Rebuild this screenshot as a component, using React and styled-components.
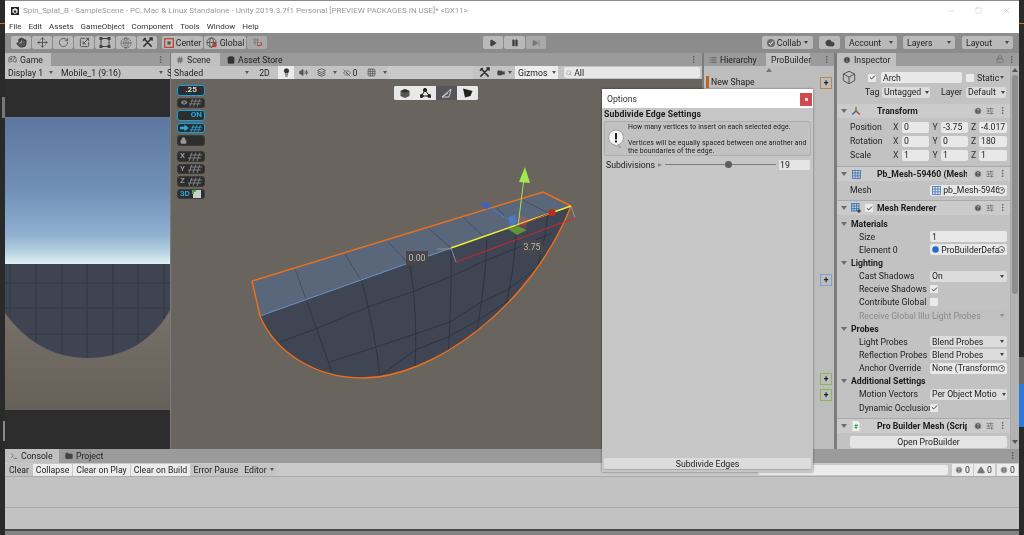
import React from "react";
import styled, { createGlobalStyle } from "styled-components";
import { Hand, Move, RotateCw, Scaling, Play, Pause, SkipForward, Cloud, Lightbulb, Volume2, Layers, Video, Search, Lock, Eye, Grid3x3, EyeOff, Gamepad2, Hash, ShoppingBag, Info, HelpCircle, SlidersHorizontal, MoreVertical, List, Folder, Terminal, Check, Minus, Square, X, AlertTriangle, AlertCircle } from "lucide-react";

const Global = createGlobalStyle`
  html, body { margin: 0; padding: 0; background: #2a2a2a; }
  * { box-sizing: border-box; }
  body { font-family: Roboto, "Liberation Sans", sans-serif; font-size: 8.7px; color: #1c1c1c; }
`;

const Desktop = styled.div`
  width: 1024px; height: 535px; display: flex; overflow: hidden; background: #2a2a2a; filter: blur(.3px);
`;
const Strip = styled.div`
  width: 5px; flex: none; background: #2a2a2a; display: flex; flex-direction: column;
`;
const StripMark = styled.div`
  height: ${p => p.$h}px; margin-top: ${p => p.$top}px; margin-left: ${p => p.$ml || 0}px; background: ${p => p.$c}; flex: none;
`;
const Win = styled.div`
  flex: 1; position: relative; display: flex; flex-direction: column; min-width: 0;
`;
const TitleBar = styled.div`
  height: 20px; background: #fff; border-top: 1px solid #8b8b8b; display: flex; align-items: center;
  padding-left: 6px; color: #9a9a9a; font-size: 8px; white-space: nowrap;
`;
const AppLogo = styled.div`
  width: 8px; height: 8px; background: #222; margin-right: 4px;
  display: flex; align-items: center; justify-content: center;
`;
const WinButtons = styled.div`
  margin-left: auto; display: flex; gap: 20px; padding-right: 8px; color: #9a9a9a; align-items: center;
`;
const MenuBar = styled.div`
  height: 13px; background: #fff; display: flex; align-items: center; padding-left: 4px; gap: 7px;
  font-size: 8px; color: #333;
`;
const Toolbar = styled.div`
  height: 20px; background: #8c8c8c; display: flex; align-items: flex-start; padding: 3px 6px 0;
`;
const ToolGroup = styled.div`
  display: flex; gap: ${p => p.$gap ?? 1}px; margin-left: ${p => p.$ml || 0}px;
`;
const ToolBtn = styled.div`
  width: ${p => p.$w || 20}px; height: 13px; background: ${p => p.$bg || "#b9b9b9"};
  border-radius: 2px; display: flex; align-items: center; justify-content: ${p => p.$j || "center"}; gap: 2px;
  padding: 0 ${p => (p.$j ? 4 : 0)}px; color: #1f1f1f; white-space: nowrap;
`;
const Spacer = styled.div` flex: 1; `;
const Work = styled.div`
  height: 396px; display: flex; background: #7c7c7c;
`;
const Panel = styled.div`
  width: ${p => p.$w}px; margin-left: ${p => p.$ml || 0}px; flex: none; display: flex; flex-direction: column; min-height: 0; position: relative;
`;
const TabRow = styled.div`
  height: 13px; background: #9b9b9b; display: flex; align-items: stretch; flex: none; position: relative;
`;
const Tab = styled.div`
  width: ${p => p.$w}px; background: ${p => (p.$on ? "#c0c0c0" : "transparent")};
  display: flex; align-items: center; padding-left: ${p => p.$pl ?? 4}px; gap: 3px; color: #1f1f1f; white-space: nowrap;
`;
const Kebab = styled.div`
  position: absolute; right: ${p => p.$r}px; top: 2px; color: #555; display: flex;
`;
const CtlRow = styled.div`
  height: 13px; background: #c3c3c3; display: flex; align-items: center; flex: none; color: #1f1f1f;
`;
const Ctl = styled.div`
  width: ${p => p.$w}px; flex: none; margin-left: ${p => p.$ml || 0}px; height: 13px; display: flex; align-items: center;
  padding-left: ${p => p.$pl ?? 3}px; justify-content: ${p => (p.$center ? "center" : "flex-start")};
  background: ${p => p.$bg || "transparent"}; position: relative; gap: 2px; white-space: nowrap; overflow: hidden;
`;
const Caret = styled.span`
  width: 0; height: 0; flex: none; border-left: 2.5px solid transparent; border-right: 2.5px solid transparent;
  border-top: 3px solid ${p => p.$c || "#444"};
  margin-left: ${p => (p.$auto ? "auto" : "1px")}; margin-right: ${p => p.$mr ?? 3}px;
`;
const GameView = styled.div`
  flex: 1; display: flex; flex-direction: column; background: #2d2d2d;
`;
const Letterbox = styled.div` height: ${p => p.$h}px; flex: none; background: #2d2d2d; `;
const GameScreen = styled.svg` display: block; flex: none; `;
const SceneView = styled.div`
  flex: 1; position: relative; background: #6a645e; overflow: hidden;
`;
const MeshSvg = styled.svg` position: absolute; inset: 0; display: block; `;
const SnapColumn = styled.div`
  position: absolute; left: 6px; top: 6px; width: 28px; display: flex; flex-direction: column; gap: 2px;
`;
const Snap = styled.div`
  height: 10.6px; border-radius: 3px; background: #2d2d2d; margin-top: ${p => p.$mt || 0}px;
  border: ${p => (p.$cy ? "1px solid #12a3dc" : "1px solid #3c3c3c")}; display: flex; align-items: center; justify-content: ${p => p.$j || "space-between"};
  padding: 0 2px; font-size: 8px; font-weight: 600; color: ${p => p.$c || "#9a9a9a"}; line-height: 1; overflow: hidden;
`;
const ModeBar = styled.div`
  position: absolute; left: 223px; top: 7px; height: 14px; display: flex; border-radius: 2px; overflow: hidden; background: #e6e6e6;
`;
const ModeBtn = styled.div`
  width: 21px; background: ${p => (p.$on ? "#56565a" : "#e8e8e8")}; display: flex; align-items: center; justify-content: center;
`;
const Badge = styled.div`
  position: absolute; left: ${p => p.$x}px; top: ${p => p.$y}px; width: 22px; height: 14px; background: #47474a; color: #b8b8b8; display: flex; align-items: center; justify-content: center;
`;
const HierBody = styled.div`
  flex: 1; background: #bdbdbd; position: relative;
`;
const HierUp = styled.div`
  width: 0; height: 0; border-left: 3px solid transparent; border-right: 3px solid transparent; border-bottom: 4px solid #777;
  position: absolute; top: 2px; left: 62px;
`;
const HierRow = styled.div`
  position: absolute; left: 2px; top: 10px; width: 108px; height: 12px; display: flex; align-items: center; gap: 2px;
  &::before { content: ""; width: 3px; height: 12px; background: #bd6523; }
`;
const PlusBox = styled.div`
  position: absolute; left: 116px; top: ${p => p.$y}px; width: 12px; height: 12px; border: 1px solid ${p => p.$c}; display: flex; align-items: center; justify-content: center; font-weight: 700; color: #222; line-height: 1;
`;
const Insp = styled.div`
  flex: 1; display: flex; background: #c2c2c2; min-height: 0; overflow: hidden;
`;
const InspContent = styled.div`
  width: 173px; flex: none; overflow: hidden;
`;
const Scrollbar = styled.div`
  width: 9px; flex: none; background: #b2b2b2; position: relative; border-left: 1px solid #ababab;
`;
const Thumb = styled.div`
  position: absolute; left: 1px; right: 1px; top: 9px; height: 219px; background: #8e8e8e; border-radius: 3px;
`;
const ArrowTip = styled.div`
  position: absolute; left: 1px; top: ${p => p.$y}px; width: 0; height: 0; border-left: 3px solid transparent; border-right: 3px solid transparent;
  ${p => (p.$down ? "border-top: 4px solid #555;" : "border-bottom: 4px solid #555;")}
`;
const ObjRow = styled.div`
  height: ${p => p.$h}px; margin-top: ${p => p.$mt || 0}px; display: flex; align-items: center; padding-left: ${p => p.$pl || 0}px;
  color: #222; flex: none; white-space: nowrap;
`;
const CubeWrap = styled.div`
  width: 14px; height: 16px; margin-left: 5px; margin-right: 12px; display: flex; align-items: center; flex: none;
`;
const Checkbox = styled.div`
  width: 8px; height: 8px; background: #eaeaea; border-radius: 1px; flex: none; display: flex; align-items: center; justify-content: center; color: #222; margin-left: ${p => p.$ml || 0}px;
`;
const TextField = styled.div`
  width: ${p => p.$w}px; height: 11px; background: #e8e8e8; border-radius: 2px; display: flex; align-items: center; padding-left: 2px; flex: none;
  margin-left: ${p => p.$ml || 0}px; color: #222; overflow: hidden; white-space: nowrap; position: relative;
`;
const Select = styled(TextField)`
  background: ${p => (p.$dis ? "#c0c0c0" : "#dcdcdc")}; color: ${p => (p.$dis ? "#8a8a8a" : "#222")};
`;
const Hdr = styled.div`
  height: 14px; background: #cbcbcb; margin-top: ${p => p.$mt || 0}px; display: flex; align-items: center; padding-left: 4px; font-weight: 700; position: relative;
  white-space: nowrap; flex: none;
`;
const Fold = styled.span`
  width: 0; height: 0; flex: none; border-left: 3px solid transparent; border-right: 3px solid transparent; border-top: 4px solid #6c6c6c; margin-right: ${p => p.$mr ?? 4}px;
`;
const HdrIcon = styled.div`
  width: 10px; height: 10px; display: flex; align-items: center; justify-content: center; margin-right: ${p => p.$mr ?? 16}px; flex: none;
`;
const HdrTitle = styled.div`
  width: ${p => p.$w || 90}px; margin-left: ${p => p.$ml || 0}px; overflow: hidden; flex: none;
`;
const HdrTools = styled.div`
  position: absolute; right: 3px; top: 2px; display: flex; gap: 4px; align-items: center; color: #555;
`;
const Section = styled.div`
  height: 13.15px; margin-top: ${p => p.$mt || 0}px; display: flex; align-items: center; padding-left: 4px; font-weight: 700; flex: none;
`;
const PropRow = styled.div`
  height: ${p => p.$h || 13.15}px; display: flex; align-items: center; flex: none; padding-left: ${p => p.$pl ?? 22}px; white-space: nowrap;
  color: ${p => (p.$dis ? "#8a8a8a" : "#222")}; margin-top: ${p => p.$mt || 0}px;
`;
const PropLabel = styled.div`
  width: ${p => p.$w ?? 71}px; flex: none; overflow: hidden; white-space: nowrap;
`;
const Axis = styled.span`
  width: ${p => p.$w}px; flex: none; text-align: ${p => p.$a || "left"}; color: #333;
`;
const Divider = styled.div`
  height: 1px; background: #a9a9a9; margin-top: ${p => p.$mt}px; flex: none;
`;
const OpenBtn = styled.div`
  margin: 3px 3px 0 13px; height: 12px; background: #e4e4e4; border-radius: 2px; display: flex; align-items: center; justify-content: center;
`;
const TargetDot = styled.span`
  position: absolute; right: 2px; top: 2px; width: 7px; height: 7px; border-radius: 50%; border: 1px solid #666; background: #e8e8e8;
  &::after { content: ""; position: absolute; left: 1.5px; top: 1.5px; width: 2px; height: 2px; border-radius: 50%; background: #666; }
`;
const Console = styled.div`
  flex: 1; display: flex; flex-direction: column; background: #c2c2c2; position: relative;
`;
const ConsoleTabs = styled(TabRow)` height: 14px; `;
const ConsoleBar = styled(CtlRow)` background: #c9c9c9; padding-right: 1px; `;
const LogBtn = styled.div`
  width: ${p => p.$w}px; height: 12px; background: ${p => (p.$on ? "#ececec" : "#c4c4c4")}; margin-left: ${p => p.$ml ?? 1}px; display: flex; align-items: center; justify-content: center; flex: none; gap: 2px; white-space: nowrap;
`;
const LogSearch = styled.div`
  margin-left: auto; width: 190px; height: 10px; border-radius: 3px; background: #ececec;
`;
const Count = styled.div`
  width: ${p => p.$w}px; height: 12px; margin-left: ${p => p.$ml ?? 1}px; background: #ececec; display: flex; align-items: center; justify-content: center; gap: 2px; flex: none; color: #333;
`;
const LogTop = styled.div`
  height: 32px; flex: none; background: #c2c2c2; border-bottom: 1px solid #a8a8a8; border-top: 1px solid #aaa;
`;
const LogBottom = styled.div` height: 21px; flex: none; background: #c2c2c2; `;
const StatusEdge = styled.div` height: 2px; background: #4a4a4a; flex: none; `;
const StatusBar = styled.div` flex: 1; background: #848484; `;
const Options = styled.div`
  position: absolute; left: 597px; top: 89px; width: 211px; height: 383px; background: #c6c6c6; box-shadow: 0 0 2px rgba(0,0,0,.5);
  display: flex; flex-direction: column;
`;
const OptTitle = styled.div`
  height: 19px; background: #fff; display: flex; align-items: center; padding-left: 5px; color: #333; position: relative;
`;
const Close = styled.div`
  position: absolute; right: 1px; top: 4px; width: 12px; height: 13px; background: #cf4b52; display: flex; align-items: center; justify-content: center;
  &::after { content: ""; width: 3px; height: 3px; background: #f6dcdc; }
`;
const OptHead = styled.div`
  height: 12px; padding-left: 2px; font-weight: 700; letter-spacing: .1px; display: flex; align-items: center; flex: none;
`;
const HelpBox = styled.div`
  margin: 1px 2px 0; height: 35px; background: #c1c1c1; border: 1px solid #aeaeae; display: flex; padding: 1px 0 0 2px; font-size: 6.9px; line-height: 8px; letter-spacing: .1px; flex: none; border-radius: 2px; white-space: nowrap;
`;
const HelpIcon = styled.div`
  width: 21px; flex: none; padding-top: 6px;
`;
const SliderRow = styled.div`
  height: 13px; margin-top: 2px; display: flex; align-items: center; padding-left: 4px; flex: none;
`;
const SliderLabel = styled.div` width: 52px; flex: none; `;
const SliderArrow = styled.span`
  width: 0; height: 0; border-top: 2.5px solid transparent; border-bottom: 2.5px solid transparent; border-left: 4px solid #888; margin-right: 3px; flex: none;
`;
const Track = styled.div`
  width: 111px; height: 1px; background: #7d7d7d; position: relative; flex: none;
`;
const Knob = styled.div`
  position: absolute; left: 60px; top: -3px; width: 7px; height: 7px; border-radius: 50%; background: #5c5c5c;
`;
const NumField = styled.div`
  width: 31px; height: 10px; margin-left: 3px; background: #e4e4e4; padding-left: 1px; display: flex; align-items: center; flex: none; border-radius: 1px;
`;
const OptFill = styled.div` flex: 1; `;
const OptBtn = styled.div`
  margin: 0 2px 2px; height: 12px; background: #dcdcdc; border-radius: 2px; border-bottom: 1px solid #a9a9a9; display: flex; align-items: center; justify-content: center; flex: none;
`;

const ic = { strokeWidth: 1.8 };
const Dots = () => <MoreVertical size={9} color="#555" strokeWidth={2} />;
const Tools = () => (
  <svg width="11" height="11" viewBox="0 0 12 12" fill="none" stroke="#333" strokeWidth="1.6">
    <path d="M1.5 10.5 10 2M2 1.5l8.5 9M8 1h3v3M1 4l3-3" />
  </svg>
);
const Transformed = () => (
  <svg width="12" height="11" viewBox="0 0 12 11" fill="none" stroke="#444" strokeWidth="1">
    <rect x="2" y="1.5" width="8" height="8" />
    <rect x="1" y=".5" width="2" height="2" fill="#444" /><rect x="9" y=".5" width="2" height="2" fill="#444" />
    <rect x="1" y="8.5" width="2" height="2" fill="#444" /><rect x="9" y="8.5" width="2" height="2" fill="#444" />
  </svg>
);
const CombinedTool = () => (
  <svg width="12" height="12" viewBox="0 0 12 12" fill="none" stroke="#555" strokeWidth=".9" strokeDasharray="1.4 .7">
    <circle cx="6" cy="6" r="5" /><ellipse cx="6" cy="6" rx="2.2" ry="5" /><path d="M1 6h10M6 1v10" />
  </svg>
);
const CenterIcon = () => (
  <svg width="10" height="10" viewBox="0 0 10 10"><rect x=".7" y=".7" width="8.6" height="8.6" fill="none" stroke="#c33b2b" strokeWidth="1.2" /><rect x="3.4" y="3.4" width="3.2" height="3.2" fill="#555" /></svg>
);
const GlobalIcon = () => (
  <svg width="12" height="11" viewBox="0 0 12 11" fill="none" stroke="#444" strokeWidth=".8">
    <circle cx="5.5" cy="5.5" r="4.6" /><ellipse cx="5.5" cy="5.5" rx="2" ry="4.6" /><path d="M1 5.5h9" /><circle cx="8.6" cy="8" r="2.2" fill="#c33b2b" stroke="none" />
  </svg>
);
const SnapIcon = () => (
  <svg width="12" height="12" viewBox="0 0 12 12" fill="none" stroke="#7a7a7a" strokeWidth=".8">
    <path d="M2 3h6M2 5.5h6M4 1v7M6.5 1v7" /><path d="M6 8.5h3a1.5 1.5 0 0 0 0-3" stroke="#c33b2b" strokeWidth="1.2" />
  </svg>
);
const Logo = () => (
  <svg width="6" height="6" viewBox="0 0 6 6" fill="#e8e8e8"><path d="M3 0 5.6 1.5v3L3 6 .4 4.5v-3z" /><path d="M3 2.2 1.8 3v1.2L3 5l1.2-.8V3z" fill="#222" /></svg>
);
const Grid = ({ c = "#888" }) => (
  <svg width="15" height="9" viewBox="0 0 15 9" fill="none" stroke={c} strokeWidth=".9">
    <path d="M1 6h13M3 3h12M5 0.5 2 9M9 0.5 6 9M13 0.5 10 9" />
  </svg>
);
const Cube = () => (
  <svg width="14" height="15" viewBox="0 0 14 15" fill="none" stroke="#555" strokeWidth="1">
    <path d="M7 1.3 12.7 4v6.6L7 13.7 1.3 10.6V4z" /><path d="M1.3 4 7 7v6.7M7 7l5.7-3" />
  </svg>
);
const TransformIcon = () => (
  <svg width="10" height="10" viewBox="0 0 10 10" fill="none" strokeWidth="1.4">
    <path d="M5 5V1" stroke="#3a9a3a" /><path d="M5 5 1.2 8.6" stroke="#2a62b8" /><path d="M5 5l3.8 3.6" stroke="#c73b2c" />
  </svg>
);
const MeshIcon = () => (
  <svg width="9" height="9" viewBox="0 0 10 10" fill="none" stroke="#3a76b8" strokeWidth=".9">
    <rect x=".5" y=".5" width="9" height="9" /><path d="M3.5 .5v9M6.5 .5v9M.5 3.5h9M.5 6.5h9" />
  </svg>
);
const RendererIcon = () => (
  <svg width="10" height="10" viewBox="0 0 10 10" fill="none" stroke="#3a76b8" strokeWidth=".9">
    <rect x=".5" y=".5" width="7.5" height="7.5" /><path d="M3 .5v7.5M5.5 .5v7.5M.5 3h7.5M.5 5.5h7.5" /><circle cx="8" cy="8" r="1.7" fill="#444" stroke="none" />
  </svg>
);
const ScriptIcon = () => (
  <svg width="10" height="10" viewBox="0 0 10 10"><path d="M1.5 0H7l1.5 2v8h-7z" fill="#f2f2f2" /><text x="5" y="7.5" fontSize="7" fontWeight="700" textAnchor="middle" fill="#2e9d3d" fontFamily="Roboto, sans-serif">#</text></svg>
);
const BubbleIcon = () => (
  <svg width="18" height="20" viewBox="0 0 18 20" fill="#f4f4f4" stroke="#888" strokeWidth=".7">
    <path d="M9 1a7.5 7.5 0 0 1 1.7 14.8L14 18.6l-7-2.9A7.5 7.5 0 0 1 9 1z" />
    <rect x="8" y="4" width="2" height="6.4" fill="#222" stroke="none" /><rect x="8" y="11.5" width="2" height="2" fill="#222" stroke="none" />
  </svg>
);
const HdrBtns = () => (
  <HdrTools>
    <HelpCircle size={8} color="#cbcbcb" fill="#555" strokeWidth={2} />
    <SlidersHorizontal size={8} color="#555" strokeWidth={2} />
    <Dots />
  </HdrTools>
);

const ARC = "C275 352 315 378 363 378 C430 378 530 310 571 206";
const Mesh = () => (
  <MeshSvg width="531" height="370" viewBox="171 79 531 370">
    <defs>
      <clipPath id="front"><path d={`M260 316 ${ARC} Z`} /></clipPath>
    </defs>
    <path d="M252 281 L543 192 L571 206 L260 316Z" fill="#5a677b" />
    <path d={`M260 316 ${ARC} Z`} fill="#3f4553" />
    <g stroke="#3c4452" strokeWidth="1" strokeOpacity=".7" fill="none">
      <path d="M295 269 L307 302" /><path d="M345 254 L362 282" /><path d="M388 242 L410 265" /><path d="M428 228 L451 248" /><path d="M463 217 L487 240" /><path d="M497 208 L517 230" /><path d="M523 200 L548 213" />
    </g>
    <g clipPath="url(#front)" stroke="#2b2f39" strokeWidth="1" strokeOpacity=".75" fill="none">
      <path d="M307 302 L332 372" /><path d="M362 282 Q375 330 380 378" /><path d="M410 265 Q418 310 415 372" /><path d="M451 248 Q452 290 448 358" /><path d="M487 240 Q485 290 475 340" /><path d="M517 230 Q514 270 505 312" /><path d="M548 213 Q545 245 535 275" />
      <path d="M280 342 L318 328 L368 307 L412 292 L450 277 L482 262 L517 248 L552 233" />
      <path d="M330 362 L373 348 L415 334 L450 322 L480 303 L507 290 L537 268 L560 245" />
      <path d="M380 376 L415 350 L448 337 L475 322 L510 300" />
    </g>
    <path d="M260 316 L451 248" stroke="#6c90c6" strokeWidth="1" fill="none" />
    <path d={`M252 281 L543 192 L571 206 M260 316 ${ARC} M260 316 L252 281`} fill="none" stroke="#f06f1a" strokeWidth="1.4" />
    <path d="M451 248 L571 206" stroke="#f2ee32" strokeWidth="1.5" />
    <path d="M456 262 L575 218" stroke="#d4232b" strokeWidth="1" />
    <path d="M451 248 L456 262M571 206 L575 218M437 249 L451 249" stroke="#9a9a9a" strokeWidth=".8" />
    <path d="M508 229 L518 226 L527 230 L517 235Z" fill="#6aa036" fillOpacity=".85" />
    <path d="M508 218 L515 214 L517 222 L510 227Z" fill="#4f7fd8" fillOpacity=".7" />
    <path d="M518 215 L528 218 L526 228 L518 225Z" fill="#d4575a" fillOpacity=".35" />
    <path d="M518 226 L524 178" stroke="#a4e05a" strokeWidth="1" />
    <path d="M519 182 L525 167 L530 183Z" fill="#a3e84e" />
    <path d="M518 226 L486 205" stroke="#4a7ad8" strokeWidth="1" />
    <path d="M480 203 L490 203 L487 210Z" fill="#3a60d0" />
    <path d="M518 226 L553 212" stroke="#bf2d20" strokeWidth="1" />
    <circle cx="552" cy="212.5" r="3.6" fill="#b72e20" />
  </MeshSvg>
);

export default function App() {
  return (
    <Desktop>
      <Global />
      <Strip>
        <StripMark $top={23} $h={1} $c="#d9701f" />
        <StripMark $top={73} $h={21} $ml={2} $c="#777" />
        <StripMark $top={303} $h={20} $ml={3} $c="#8a8a8a" />
      </Strip>
      <Win>
        <TitleBar>
          <AppLogo><Logo /></AppLogo>
          Spin_Splat_B - SampleScene - PC, Mac &amp; Linux Standalone - Unity 2019.3.7f1 Personal [PREVIEW PACKAGES IN USE]* &lt;DX11&gt;
          <WinButtons>
            <Minus size={8} strokeWidth={1} /><Square size={7} strokeWidth={1} /><X size={9} strokeWidth={1} />
          </WinButtons>
        </TitleBar>
        <MenuBar>
          <span>File</span><span>Edit</span><span>Assets</span><span>GameObject</span><span>Component</span><span>Tools</span><span>Window</span><span>Help</span>
        </MenuBar>
        <Toolbar>
          <ToolGroup>
            <ToolBtn><Hand size={11} color="#333" fill="#555" {...ic} /></ToolBtn>
            <ToolBtn><Move size={11} color="#444" {...ic} /></ToolBtn>
            <ToolBtn><RotateCw size={11} color="#555" {...ic} /></ToolBtn>
            <ToolBtn><Scaling size={11} color="#444" {...ic} /></ToolBtn>
            <ToolBtn><Transformed /></ToolBtn>
            <ToolBtn><CombinedTool /></ToolBtn>
            <ToolBtn><Tools /></ToolBtn>
          </ToolGroup>
          <ToolGroup $ml={5}>
            <ToolBtn $w={41}><CenterIcon />Center</ToolBtn>
            <ToolBtn $w={42}><GlobalIcon />Global</ToolBtn>
            <ToolBtn $w={20} $bg="#a8a8a8"><SnapIcon /></ToolBtn>
          </ToolGroup>
          <Spacer />
          <ToolGroup>
            <ToolBtn $w={20}><Play size={8} fill="#444" color="#444" /></ToolBtn>
            <ToolBtn $w={21}><Pause size={8} fill="#444" color="#444" /></ToolBtn>
            <ToolBtn $w={20} $bg="#a9a9a9"><SkipForward size={8} color="#777" fill="#777" /></ToolBtn>
          </ToolGroup>
          <Spacer />
          <ToolGroup>
            <ToolBtn $w={51}><svg width="8" height="8" viewBox="0 0 8 8"><circle cx="4" cy="4" r="4" fill="#6e6e6e" /><path d="M2 4l1.5 1.5L6 2.5" stroke="#fff" fill="none" /></svg>Collab<Caret $mr={0} /></ToolBtn>
          </ToolGroup>
          <ToolGroup $ml={6}>
            <ToolBtn $w={21}><Cloud size={10} fill="#444" color="#444" /></ToolBtn>
          </ToolGroup>
          <ToolGroup $ml={5}><ToolBtn $w={52} $j="flex-start">Account<Caret $auto $mr={0} /></ToolBtn></ToolGroup>
          <ToolGroup $ml={6}><ToolBtn $w={52} $j="flex-start">Layers<Caret $auto $mr={0} /></ToolBtn></ToolGroup>
          <ToolGroup $ml={7}><ToolBtn $w={51} $j="flex-start">Layout<Caret $auto $mr={0} /></ToolBtn></ToolGroup>
        </Toolbar>
        <Work>
          <Panel $w={165}>
            <TabRow>
              <Tab $w={46} $on $pl={3}><Gamepad2 size={9} color="#444" />Game</Tab>
              <Kebab $r={5}><Dots /></Kebab>
            </TabRow>
            <CtlRow>
              <Ctl $w={51} $pl={3}>Display 1<Caret $auto $c="#555" /></Ctl>
              <Ctl $w={108} $ml={2}>Mobile_1 (9:16)<Caret $auto $c="#555" /></Ctl>
              <Ctl $w={4} $pl={0} $ml={1}>S</Ctl>
            </CtlRow>
            <GameView>
              <Letterbox $h={38} />
              <GameScreen width="165" height="293" viewBox="0 0 165 293">
                <defs>
                  <linearGradient id="sky" x1="0" y1="0" x2="0" y2="1">
                    <stop offset="0" stopColor="#5d779f" />
                    <stop offset=".5" stopColor="#7190b8" />
                    <stop offset=".8" stopColor="#8fb0cf" />
                    <stop offset=".92" stopColor="#b8d3e2" />
                    <stop offset="1" stopColor="#e2f2f6" />
                  </linearGradient>
                  <linearGradient id="ground" x1="0" y1="0" x2="0" y2="1">
                    <stop offset="0" stopColor="#80786e" />
                    <stop offset="1" stopColor="#66605a" />
                  </linearGradient>
                </defs>
                <rect width="165" height="147" fill="url(#sky)" />
                <rect y="147" width="165" height="146" fill="url(#ground)" />
                <path d="M0 147 H165 V193 C148 224 118 241 83 241 C48 241 20 224 0 196Z" fill="#3e4451" />
                <g stroke="#333843" strokeWidth="1" fill="none">
                  <path d="M5 147V200M31 147V224M57 147V237M82 147V241M108 147V238M133 147V226M159 147V202" />
                  <path d="M0 166H165M0 191H165M21 217H145" />
                </g>
              </GameScreen>
              <Letterbox $h={39} />
            </GameView>
          </Panel>
          <Panel $w={531} $ml={1}>
            <TabRow>
              <Tab $w={49} $on $pl={5}><Hash size={8} color="#444" />Scene</Tab>
              <Tab $w={70} $pl={7}><ShoppingBag size={8} color="#333" fill="#333" />Asset Store</Tab>
              <Kebab $r={4}><Dots /></Kebab>
            </TabRow>
            <CtlRow>
              <Ctl $w={82}>Shaded<Caret $auto $c="#555" $mr={4} /></Ctl>
              <Ctl $w={17} $ml={3} $center $pl={0}>2D</Ctl>
              <Ctl $w={16} $ml={5} $center $pl={0} $bg="#ebebeb"><Lightbulb size={9} fill="#333" color="#333" /></Ctl>
              <Ctl $w={15} $ml={2} $center $pl={0}><Volume2 size={9} color="#555" fill="#555" /></Ctl>
              <Ctl $w={16} $ml={2} $center $pl={0}><Layers size={9} color="#444" /></Ctl>
              <Ctl $w={10} $center $pl={0}><Caret $c="#555" $mr={0} /></Ctl>
              <Ctl $w={18} $ml={2} $center $pl={0}><EyeOff size={8} color="#555" />0</Ctl>
              <Ctl $w={18} $ml={3} $center $pl={0}><Grid3x3 size={9} color="#555" /></Ctl>
              <Ctl $w={8} $center $pl={0}><Caret $c="#555" $mr={0} /></Ctl>
              <Ctl $w={85} $pl={0} $bg="#c9c9c9" />
              <Ctl $w={19} $ml={2} $center $pl={0}><Tools /></Ctl>
              <Ctl $w={20} $center $pl={0}><Video size={8} color="#444" fill="#444" /><Caret $c="#555" $mr={0} /></Ctl>
              <Ctl $w={43} $ml={1} $bg="#ececec">Gizmos<Caret $auto $c="#555" $mr={2} /></Ctl>
              <Ctl $w={136} $ml={6} $pl={0}>
                <TextField $w={136}><Search size={6} color="#888" />&nbsp;<span>All</span></TextField>
              </Ctl>
            </CtlRow>
            <SceneView>
              <Mesh />
              <SnapColumn>
                <Snap $cy $c="#e6e6e6" $j="center">.25</Snap>
                <Snap><Eye size={9} color="#2d2d2d" fill="#9a9a9a" /><Grid /></Snap>
                <Snap $cy $c="#21b0ee" $j="flex-end">ON</Snap>
                <Snap $cy><svg width="10" height="8" viewBox="0 0 10 8"><path d="M0 2.5h5V0l5 4-5 4V5.5H0z" fill="#21b0ee" /></svg><Grid c="#21b0ee" /></Snap>
                <Snap><Lock size={7} color="#9a9a9a" fill="#9a9a9a" /></Snap>
                <Snap $mt={3}>X<Grid /></Snap>
                <Snap>Y<Grid /></Snap>
                <Snap>Z<Grid /></Snap>
                <Snap $c="#21b0ee">3D<svg width="10" height="8" viewBox="0 0 10 8"><rect x="1" width="8" height="8" fill="#cfcfcf" /><path d="M0 0h4v2H2v2H0z" fill="#4fa83d" /></svg></Snap>
              </SnapColumn>
              <ModeBar>
                <ModeBtn><svg width="10" height="9" viewBox="0 0 10 9"><path d="M5 0 9.5 2v5L5 9 .5 7V2z" fill="#555" /><path d="M.5 2 5 4l4.5-2L5 0z" fill="#333" /></svg></ModeBtn>
                <ModeBtn><svg width="11" height="10" viewBox="0 0 11 10" fill="#222" stroke="#222"><path d="M5 2 1.5 8h8z" fill="none" /><circle cx="5" cy="2" r="1.6" /><circle cx="1.6" cy="8" r="1.6" /><circle cx="9.4" cy="8" r="1.6" /></svg></ModeBtn>
                <ModeBtn $on><svg width="11" height="10" viewBox="0 0 11 10" fill="none" stroke="#cfcfcf" strokeWidth="1"><path d="M1 9 10 1 8 9zM1 9 7 5" /></svg></ModeBtn>
                <ModeBtn><svg width="11" height="10" viewBox="0 0 11 10"><path d="M1 .5 10.5 3l-2 5L3 9.5z" fill="#222" /></svg></ModeBtn>
              </ModeBar>
              <Badge $x={235} $y={172}>0.00</Badge>
              <Badge $x={350} $y={161}>3.75</Badge>
            </SceneView>
          </Panel>
          <Panel $w={130} $ml={2}>
            <TabRow>
              <Tab $w={62} $pl={5}><List size={8} color="#444" />Hierarchy</Tab>
              <Tab $w={44} $on $pl={5}>ProBuilder</Tab>
              <Kebab $r={3}><Dots /></Kebab>
            </TabRow>
            <HierBody>
              <HierUp />
              <HierRow>New Shape</HierRow>
              <PlusBox $y={11} $c="#c0834e">+</PlusBox>
              <PlusBox $y={208} $c="#7ba5cf">+</PlusBox>
              <PlusBox $y={307} $c="#8fb55a">+</PlusBox>
              <PlusBox $y={323} $c="#8fb55a">+</PlusBox>
            </HierBody>
          </Panel>
          <Panel $w={182} $ml={3}>
            <TabRow>
              <Tab $w={59} $on $pl={6}><Info size={8} fill="#444" color="#c0c0c0" />Inspector</Tab>
              <Kebab $r={15}><Lock size={8} color="#666" /></Kebab>
              <Kebab $r={3}><Dots /></Kebab>
            </TabRow>
            <Insp>
              <InspContent>
                <ObjRow $h={15} $mt={4}>
                  <CubeWrap><Cube /></CubeWrap>
                  <Checkbox><Check size={7} strokeWidth={3} /></Checkbox>
                  <TextField $w={81} $ml={5}>Arch</TextField>
                  <Checkbox $ml={4} />
                  <PropLabel $w={3} />
                  Static<Caret $c="#555" />
                </ObjRow>
                <ObjRow $h={14} $pl={28}>
                  <PropLabel $w={17}>Tag</PropLabel>
                  <Select $w={48}>Untagged<Caret $auto $c="#444" $mr={1} /></Select>
                  <PropLabel $w={11} />
                  <PropLabel $w={25}>Layer</PropLabel>
                  <Select $w={40}>Default<Caret $auto $c="#444" $mr={1} /></Select>
                </ObjRow>
                <Hdr $mt={5}>
                  <Fold /><HdrIcon><TransformIcon /></HdrIcon>
                  <HdrTitle>Transform</HdrTitle>
                  <HdrBtns />
                </Hdr>
                <PropRow $h={14} $pl={13} $mt={2}>
                  <PropLabel $w={43}>Position</PropLabel>
                  <Axis $w={9}>X</Axis><TextField $w={27}>0</TextField>
                  <Axis $w={12} $a="center">Y</Axis><TextField $w={27}>-3.75</TextField>
                  <Axis $w={11} $a="center">Z</Axis><TextField $w={28}>-4.017</TextField>
                </PropRow>
                <PropRow $h={14} $pl={13}>
                  <PropLabel $w={43}>Rotation</PropLabel>
                  <Axis $w={9}>X</Axis><TextField $w={27}>0</TextField>
                  <Axis $w={12} $a="center">Y</Axis><TextField $w={27}>0</TextField>
                  <Axis $w={11} $a="center">Z</Axis><TextField $w={28}>180</TextField>
                </PropRow>
                <PropRow $h={14} $pl={13}>
                  <PropLabel $w={43}>Scale</PropLabel>
                  <Axis $w={9}>X</Axis><TextField $w={27}>1</TextField>
                  <Axis $w={12} $a="center">Y</Axis><TextField $w={27}>1</TextField>
                  <Axis $w={11} $a="center">Z</Axis><TextField $w={28}>1</TextField>
                </PropRow>
                <Divider $mt={4} />
                <Hdr>
                  <Fold /><HdrIcon><MeshIcon /></HdrIcon>
                  <HdrTitle $w={90}>Pb_Mesh-59460 (Mesh Filter)</HdrTitle>
                  <HdrBtns />
                </Hdr>
                <PropRow $h={14} $pl={13} $mt={2}>
                  <PropLabel $w={80}>Mesh</PropLabel>
                  <TextField $w={77}><MeshIcon />&nbsp;pb_Mesh-5946<TargetDot /></TextField>
                </PropRow>
                <Divider $mt={3} />
                <Hdr>
                  <Fold /><HdrIcon $mr={4}><RendererIcon /></HdrIcon>
                  <Checkbox><Check size={7} strokeWidth={3} /></Checkbox>
                  <HdrTitle $w={80} $ml={4}>Mesh Renderer</HdrTitle>
                  <HdrBtns />
                </Hdr>
                <Section $mt={2}><Fold />Materials</Section>
                <PropRow><PropLabel>Size</PropLabel><TextField $w={77}>1</TextField></PropRow>
                <PropRow><PropLabel>Element 0</PropLabel><TextField $w={77}><svg width="7" height="7" viewBox="0 0 7 7"><circle cx="3.5" cy="3.5" r="3.2" fill="#1f6ad0" /></svg>&nbsp;ProBuilderDefa<TargetDot /></TextField></PropRow>
                <Section><Fold />Lighting</Section>
                <PropRow><PropLabel>Cast Shadows</PropLabel><Select $w={77}>On<Caret $auto $c="#444" /></Select></PropRow>
                <PropRow><PropLabel>Receive Shadows</PropLabel><Checkbox><Check size={7} strokeWidth={3} /></Checkbox></PropRow>
                <PropRow><PropLabel>Contribute Global</PropLabel><Checkbox /></PropRow>
                <PropRow $dis><PropLabel>Receive Global Illumination</PropLabel><Select $w={77} $dis>Light Probes<Caret $auto $c="#8a8a8a" /></Select></PropRow>
                <Section><Fold />Probes</Section>
                <PropRow><PropLabel>Light Probes</PropLabel><Select $w={77}>Blend Probes<Caret $auto $c="#444" /></Select></PropRow>
                <PropRow><PropLabel>Reflection Probes</PropLabel><Select $w={77}>Blend Probes<Caret $auto $c="#444" /></Select></PropRow>
                <PropRow><PropLabel>Anchor Override</PropLabel><TextField $w={77}>None (Transform<TargetDot /></TextField></PropRow>
                <Section><Fold />Additional Settings</Section>
                <PropRow><PropLabel>Motion Vectors</PropLabel><Select $w={77}>Per Object Motio<Caret $auto $c="#444" $mr={1} /></Select></PropRow>
                <PropRow><PropLabel>Dynamic Occlusion</PropLabel><Checkbox><Check size={7} strokeWidth={3} /></Checkbox></PropRow>
                <Divider $mt={4} />
                <Hdr>
                  <Fold /><HdrIcon><ScriptIcon /></HdrIcon>
                  <HdrTitle>Pro Builder Mesh (Script)</HdrTitle>
                  <HdrBtns />
                </Hdr>
                <OpenBtn>Open ProBuilder</OpenBtn>
              </InspContent>
              <Scrollbar>
                <ArrowTip $y={2} />
                <Thumb />
                <ArrowTip $y={374} $down />
              </Scrollbar>
            </Insp>
          </Panel>
        </Work>
        <Console>
          <ConsoleTabs>
            <Tab $w={54} $on $pl={5}><Terminal size={8} color="#555" />Console</Tab>
            <Tab $w={50} $pl={6}><Folder size={8} color="#444" fill="#444" />Project</Tab>
            <Kebab $r={2}><Dots /></Kebab>
          </ConsoleTabs>
          <ConsoleBar>
            <LogBtn $w={28} $ml={0}>Clear</LogBtn>
            <LogBtn $w={39} $on $ml={0}>Collapse</LogBtn>
            <LogBtn $w={57} $on>Clear on Play</LogBtn>
            <LogBtn $w={59} $on>Clear on Build</LogBtn>
            <LogBtn $w={50}>Error Pause</LogBtn>
            <LogBtn $w={34}>Editor<Caret $c="#555" $mr={0} /></LogBtn>
            <LogSearch />
            <Count $w={21} $ml={4}><AlertCircle size={8} fill="#777" color="#ececec" />0</Count>
            <Count $w={21}><AlertTriangle size={8} fill="#777" color="#777" />0</Count>
            <Count $w={21} $ml={2}><AlertCircle size={8} fill="#777" color="#ececec" />0</Count>
          </ConsoleBar>
          <LogTop />
          <LogBottom />
          <StatusEdge />
          <StatusBar />
        </Console>
        <Options>
          <OptTitle>Options<Close /></OptTitle>
          <OptHead>Subdivide Edge Settings</OptHead>
          <HelpBox>
            <HelpIcon><BubbleIcon /></HelpIcon>
            <div>How many vertices to insert on each selected edge.<br /><br />Vertices will be equally spaced between one another and<br />the boundaries of the edge.</div>
          </HelpBox>
          <SliderRow>
            <SliderLabel>Subdivisions</SliderLabel>
            <SliderArrow />
            <Track><Knob /></Track>
            <NumField>19</NumField>
          </SliderRow>
          <OptFill />
          <OptBtn>Subdivide Edges</OptBtn>
        </Options>
      </Win>
      <Strip>
        <StripMark $top={23} $h={1} $c="#d9701f" />
        <StripMark $top={333} $h={27} $c="#6a6a6a" />
        <StripMark $top={0} $h={43} $c="#2b79d8" />
      </Strip>
    </Desktop>
  );
}
